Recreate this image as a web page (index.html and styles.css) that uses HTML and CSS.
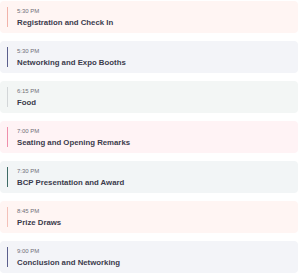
FILE: index.html
```html
<!DOCTYPE html>
<html>
<head>
<meta charset="utf-8">
<link rel="stylesheet" href="styles.css">
</head>
<body>
<div class="list">
  <div class="item c1"><span class="bar"></span><div class="txt"><div class="time">5:30 PM</div><div class="title">Registration and Check In</div></div></div>
  <div class="item c2"><span class="bar"></span><div class="txt"><div class="time">5:30 PM</div><div class="title">Networking and Expo Booths</div></div></div>
  <div class="item c3"><span class="bar"></span><div class="txt"><div class="time">6:15 PM</div><div class="title">Food</div></div></div>
  <div class="item c4"><span class="bar"></span><div class="txt"><div class="time">7:00 PM</div><div class="title">Seating and Opening Remarks</div></div></div>
  <div class="item c5"><span class="bar"></span><div class="txt"><div class="time">7:30 PM</div><div class="title">BCP Presentation and Award</div></div></div>
  <div class="item c6"><span class="bar"></span><div class="txt"><div class="time">8:45 PM</div><div class="title">Prize Draws</div></div></div>
  <div class="item c7"><span class="bar"></span><div class="txt"><div class="time">9:00 PM</div><div class="title">Conclusion and Networking</div></div></div>
</div>
</body>
</html>
```
FILE: styles.css
```css
html, body { margin: 0; padding: 0; background: #fff; }
body { font-family: "Liberation Sans", Arial, sans-serif; }
.list { display: flex; flex-direction: column; gap: 8px; padding: 1px 2px 0 0; }
.item { display: flex; align-items: flex-start; gap: 9px; height: 20px; padding: 6px 7px; border-radius: 4px; }
.bar { width: 1px; height: 20px; flex: none; }
.txt { display: flex; flex-direction: column; }
.time { font-size: 6px; line-height: 8px; color: #707078; }
.title { margin-top: 2px; font-size: 7.8px; line-height: 11px; font-weight: 700; color: #3b3b4c; }
.c1 { background: #fff5f3; } .c1 .bar { background: #f1b3aa; }
.c2 { background: #f3f4f8; } .c2 .bar { background: #5b5f8c; }
.c3 { background: #f3f6f5; } .c3 .bar { background: #d3d6d8; }
.c4 { background: #fff3f5; } .c4 .bar { background: #ef8fab; }
.c5 { background: #f2f5f6; } .c5 .bar { background: #3f6b66; }
.c6 { background: #fff5f3; } .c6 .bar { background: #f3c1b9; }
.c7 { background: #f3f4f8; } .c7 .bar { background: #5b5f8c; }
```
